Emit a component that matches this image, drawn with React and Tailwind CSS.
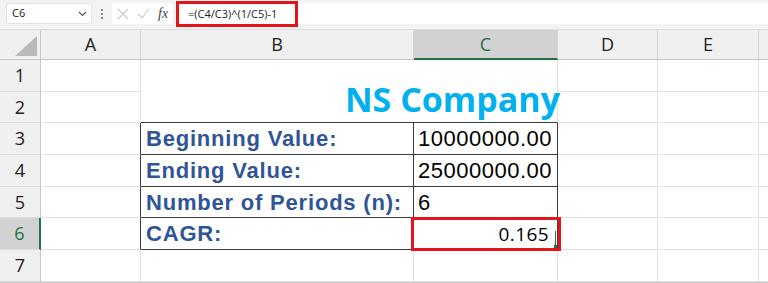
import React from "react";

const cols = "41px 100px 273px 144px 100px 101px 9px";
const grid = "border-r border-b border-[#e1e1e1]";
const rowH = [32, 31, 32, 32, 31, 32, 32];
const arial = { fontFamily: '"Liberation Sans", Arial, sans-serif' };

function Head({ children, active }) {
  return (
    <div
      className={`flex items-center justify-center text-[18px] border-b border-[#c6c6c6] border-r border-r-[#d4d4d4] ${
        active ? "bg-[#d2d2d2] text-[#217346] border-b-2 border-b-[#217346]" : "bg-[#f0f0f0] text-[#222]"
      }`}
    >
      {children}
    </div>
  );
}

function RowNum({ n, h, active }) {
  return (
    <div
      style={{ height: h }}
      className={`flex items-center justify-center text-[18px] border-b border-[#dcdcdc] ${
        active ? "bg-[#d2d2d2] text-[#217346] border-r-2 border-r-[#217346]" : "bg-[#f0f0f0] text-[#222] border-r border-r-[#c6c6c6]"
      }`}
    >
      {n}
    </div>
  );
}

const label = "flex items-center pl-[5px] text-[22px] tracking-[0.8px] font-bold text-[#2f5597] border-r border-b border-[#3c3c3c]";
const value = "flex items-center text-[22px] tracking-[0.5px] text-black border-r border-b border-[#3c3c3c]";

export default function App() {
  return (
    <div
      className="w-[768px] h-[283px] overflow-hidden bg-white"
      style={{ fontFamily: '"Open Sans", "Noto Sans", sans-serif' }}
    >
      {/* formula bar */}
      <div className="h-[30px] bg-[#f3f3f3] border-b border-[#dcdcdc] flex items-start pt-[3px]">
        <div className="ml-[6px] w-[86px] h-[21px] bg-white border border-[#e3e3e3] rounded-[3px] flex items-center justify-between pl-[5px] pr-[4px]">
          <span className="text-[11px] text-[#222]">C6</span>
          <svg width="9" height="6" viewBox="0 0 9 6" fill="none" stroke="#555" strokeWidth="1.2">
            <path d="M1 1l3.5 3.5L8 1" />
          </svg>
        </div>
        <div className="w-[20px] h-[21px] flex flex-col items-center justify-center gap-[2px]">
          <span className="w-[2px] h-[2px] bg-[#666] rounded-full" />
          <span className="w-[2px] h-[2px] bg-[#666] rounded-full" />
          <span className="w-[2px] h-[2px] bg-[#666] rounded-full" />
        </div>
        <div className="w-[61px] h-[21px] bg-white rounded-[3px] flex items-center pl-[5px] gap-[8px]">
          <svg width="12" height="12" viewBox="0 0 12 12" fill="none" stroke="#c8c8c8" strokeWidth="1.1">
            <path d="M1 1l10 10M11 1L1 11" />
          </svg>
          <svg width="13" height="11" viewBox="0 0 13 11" fill="none" stroke="#c8c8c8" strokeWidth="1.1">
            <path d="M1 6l4 4 7-9" />
          </svg>
          <span className="text-[14px] italic text-[#444]" style={{ fontFamily: '"Liberation Serif", serif' }}>
            fx
          </span>
        </div>
        <div className="ml-[3px] -mt-[2px] flex-1 h-[26px] flex items-start">
          <div className="w-[122px] h-[26px] border-[3px] border-[#e4141b] bg-white flex items-center pl-[9px]">
            <span className="text-[11px] text-[#222]">=(C4/C3)^(1/C5)-1</span>
          </div>
          <div className="flex-1 h-[21px] mt-[2px] bg-white" />
        </div>
      </div>

      {/* column headers */}
      <div className="grid" style={{ gridTemplateColumns: cols, gridTemplateRows: "30px" }}>
        <div className="bg-[#f0f0f0] border-r border-b border-[#c6c6c6] flex items-end justify-end pr-[3px] pb-[3px]">
          <svg width="22" height="20" viewBox="0 0 22 20">
            <path d="M22 0V20H0Z" fill="#b9b9b9" />
          </svg>
        </div>
        <Head>A</Head>
        <Head>B</Head>
        <Head active>C</Head>
        <Head>D</Head>
        <Head>E</Head>
        <div className="bg-[#f0f0f0] border-b border-b-[#c6c6c6]" />
      </div>

      {/* cells */}
      <div
        className="grid"
        style={{ gridTemplateColumns: cols, gridTemplateRows: rowH.map((h) => h + "px").join(" ") }}
      >
        {rowH.map((h, i) => (
          <div key={i} style={{ gridColumnStart: 1, gridRowStart: i + 1 }}>
            <RowNum n={i + 1} h={h} active={i === 5} />
          </div>
        ))}

        {/* column A */}
        <div className={`col-start-2 row-start-1 ${grid}`} />
        <div className={`col-start-2 row-start-2 ${grid}`} />
        <div className="col-start-2 row-start-3 border-b border-b-[#e1e1e1] border-r border-r-[#3c3c3c]" />
        <div className="col-start-2 row-start-4 border-b border-b-[#e1e1e1] border-r border-r-[#3c3c3c]" />
        <div className="col-start-2 row-start-5 border-b border-b-[#e1e1e1] border-r border-r-[#3c3c3c]" />
        <div className="col-start-2 row-start-6 border-b border-b-[#e1e1e1] border-r border-r-[#3c3c3c]" />
        <div className={`col-start-2 row-start-7 ${grid}`} />

        {/* title, merged B1:C2 */}
        <div className="col-start-3 col-end-5 row-start-1 row-end-3 flex items-end justify-end border-b border-[#3c3c3c] border-r border-r-[#e1e1e1]">
          <span className="text-[34px] font-bold text-[#00b0f0] leading-none mr-[-3px] pb-[6px]">NS Company</span>
        </div>

        {/* table */}
        <div className={`col-start-3 row-start-3 ${label}`} style={arial}>Beginning Value:</div>
        <div className={`col-start-4 row-start-3 justify-end pr-[5px] ${value}`} style={arial}>10000000.00</div>
        <div className={`col-start-3 row-start-4 ${label}`} style={arial}>Ending Value:</div>
        <div className={`col-start-4 row-start-4 justify-end pr-[5px] ${value}`} style={arial}>25000000.00</div>
        <div className={`col-start-3 row-start-5 ${label}`} style={arial}>Number of Periods (n):</div>
        <div className={`col-start-4 row-start-5 pl-[4px] ${value}`} style={arial}>6</div>
        <div className={`col-start-3 row-start-6 ${label}`} style={arial}>CAGR:</div>
        <div className="col-start-4 row-start-6 relative border-r border-b border-[#3c3c3c]">
          {/* red highlight and active-cell marks sit over the cell */}
          <div className="absolute -left-[3px] -top-[1px] -right-[4px] -bottom-[2px] border-[3px] border-[#e4141b] flex items-center justify-end pr-[9px]">
            <span className="text-[19px] tracking-[0.4px] text-black">0.165</span>
          </div>
          <div className="absolute right-[1px] top-[13px] w-[1px] h-[16px] bg-[#217346]" />
          <div className="absolute right-[0px] bottom-[1px] w-[3px] h-[3px] bg-[#217346]" />
        </div>

        <div className={`col-start-3 row-start-7 ${grid}`} />
        <div className={`col-start-4 row-start-7 ${grid}`} />

        {/* D, E, F */}
        {rowH.map((_, i) => (
          <React.Fragment key={i}>
            <div className={grid} style={{ gridColumnStart: 5, gridRowStart: i + 1 }} />
            <div className={grid} style={{ gridColumnStart: 6, gridRowStart: i + 1 }} />
            <div className="border-b border-[#e1e1e1]" style={{ gridColumnStart: 7, gridRowStart: i + 1 }} />
          </React.Fragment>
        ))}
      </div>
      <div className="h-[1px] bg-[#c6c6c6]" />
    </div>
  );
}
